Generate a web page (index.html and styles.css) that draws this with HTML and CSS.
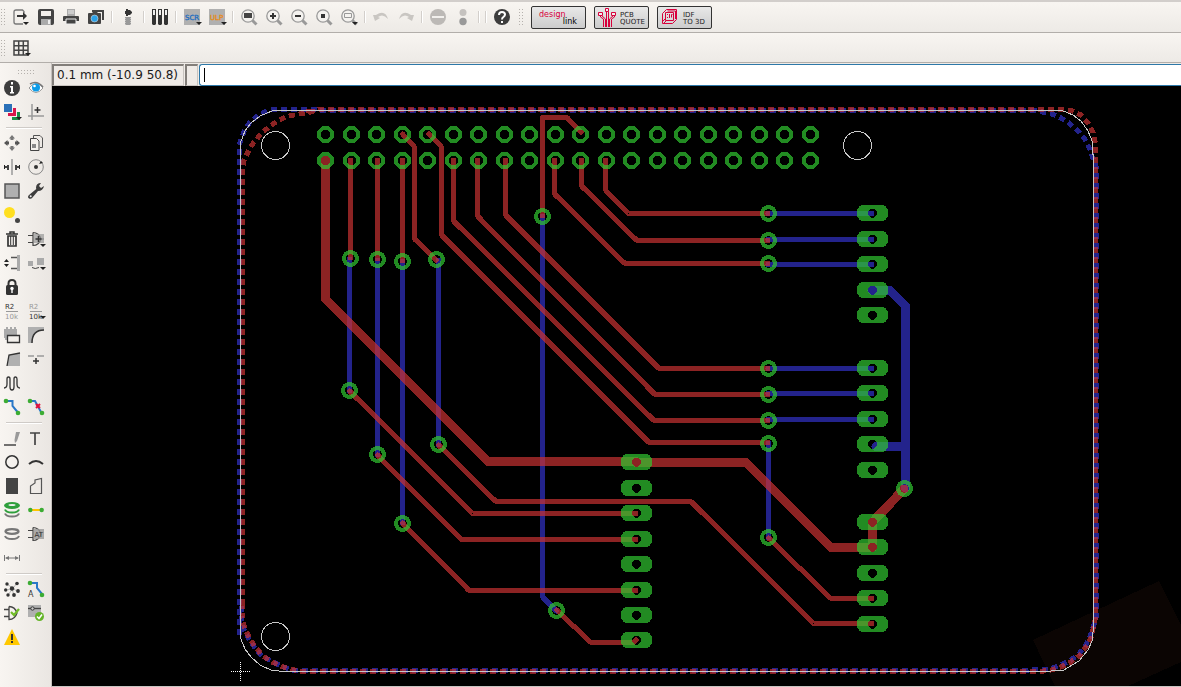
FILE: index.html
```html
<!DOCTYPE html>
<html lang="en">
<head>
  <meta charset="UTF-8">
  <meta name="viewport" content="width=device-width, initial-scale=1.0">
  <title>Board Editor</title>
  <link rel="stylesheet" href="styles.css">
</head>
<body>
  <div class="toolbar toolbar-main">
    <span class="grip"></span>
    <button class="tool" title="Open"><svg viewBox="0 0 16 16"><path d="M11 4V2.500L9.500 1H3Q1 1 1 3v10q0 2 2 2h7" fill="none" stroke="#777" stroke-width="1.300"/><path d="M4 6h6V3l4 4-4 4V8H4z" fill="#333"/><path d="M10 13h6l-3 3z" fill="#222"/></svg></button>
    <button class="tool" title="Save"><svg viewBox="0 0 16 16"><path d="M0 2q0-2 2-2h12q2 0 2 2v12q0 2-2 2H2q-2 0-2-2z" fill="#444"/><path d="M3 2h10v5H3z" fill="#f2efeb"/><path d="M3 10h10v6H3z" fill="#aaa"/><path d="M10 11h2v4h-2z" fill="#eee"/></svg></button>
    <button class="tool" title="Print"><svg viewBox="0 0 16 16"><path d="M4 0h8v7H4z" fill="#aaa"/><path d="M5 2h6M5 4h6" stroke="#eee"/><path d="M0 8q0-1 1-1h14q1 0 1 1v4H0z" fill="#444"/><path d="M3 10h10v5H3z" fill="#444" stroke="#eee"/></svg></button>
    <button class="tool" title="CAM processor"><svg viewBox="0 0 16 16"><path d="M4 2h11v9" fill="none" stroke="#444" stroke-width="2"/><path d="M0 5q0-1 1-1h3l1-1h4l1 1h2q1 0 1 1v9q0 1-1 1H1q-1 0-1-1z" fill="#444"/><circle cx="6.500" cy="9.500" r="3.500" fill="#2aa0e8" stroke="#eee" stroke-width=".5"/></svg></button>
    <span class="sep"></span>
    <button class="tool" title="Schematic"><svg viewBox="0 0 16 16"><path d="M6 0h2v1h2l2 2v1l-2 2H8v1H6V5H5V2h1z" fill="#333"/><path d="M5 8h6v1l-1 .5 1 .5v1l-1 .5 1 .5v1l-1 .5 1 .5v1l-1 1H6l-1-1v-1l1-.5-1-.5v-1l1-.5-1-.5v-1l1-.5-1-.5z" fill="#999"/></svg></button>
    <span class="sep"></span>
    <button class="tool" title="Library"><svg viewBox="0 0 16 16"><path d="M0 0h4v15l-1 1H1l-1-1zM6 0h4v15l-1 1H7l-1-1zM12 0h4v15l-1 1h-2l-1-1z" fill="#333"/><path d="M1 1h2v5H1zM7 1h2v5H7zM13 1h2v5h-2z" fill="#eee"/></svg></button>
    <span class="sep"></span>
    <button class="tool" title="Execute script"><svg viewBox="0 0 16 16"><path d="M0 0h16v16H0z" fill="#b0b0b0"/><text x="1" y="11" class="scr">SCR</text><path d="M12 13h6l-3 3z" fill="#222"/></svg></button>
    <button class="tool" title="Run ULP"><svg viewBox="0 0 16 16"><path d="M0 0h16v16H0z" fill="#b0b0b0"/><text x="1" y="11" class="scr ulp">ULP</text><path d="M12 13h6l-3 3z" fill="#222"/></svg></button>
    <span class="sep"></span>
    <button class="tool" title="Zoom to fit"><svg viewBox="0 0 16 16"><use href="#lens"/><path d="M3 4h8v5H3z" fill="#444"/></svg></button>
    <button class="tool" title="Zoom in"><svg viewBox="0 0 16 16"><use href="#lens"/><path d="M7 4v6M4 7h6" stroke="#333" stroke-width="2"/></svg></button>
    <button class="tool" title="Zoom out"><svg viewBox="0 0 16 16"><use href="#lens"/><path d="M4 7h6" stroke="#333" stroke-width="2"/></svg></button>
    <button class="tool" title="Zoom redraw"><svg viewBox="0 0 16 16"><use href="#lens"/><path d="M5 5h4v4H5z" fill="#333"/></svg></button>
    <button class="tool" title="Zoom select"><svg viewBox="0 0 16 16"><use href="#lens"/><path d="M3.500 4.500h7v4h-7z" fill="none" stroke="#999"/><path d="M11 13h6l-3 3z" fill="#222"/></svg></button>
    <span class="sep"></span>
    <button class="tool" title="Undo"><svg viewBox="0 0 16 16"><path d="M0 6l2 6 5-3-2-1q5-4 10 2Q12 0 3 6z" fill="#c9c6c2"/></svg></button>
    <button class="tool" title="Redo"><svg viewBox="0 0 16 16"><path d="M16 6l-2 6-5-3 2-1Q6 4 1 10 4 0 13 6z" fill="#c9c6c2"/></svg></button>
    <span class="sep"></span>
    <button class="tool" title="Stop"><svg viewBox="0 0 16 16"><circle cx="8" cy="8" r="8" fill="#bcb9b6"/><path d="M2 7h12v2H2z" fill="#f2f0ed"/></svg></button>
    <button class="tool" title="Go"><svg viewBox="0 0 16 16"><circle cx="8" cy="3.500" r="3.500" fill="#c5c2bf"/><circle cx="8" cy="12.500" r="3.700" fill="#999"/></svg></button>
    <span class="sep"></span>
    <span class="sep"></span>
    <button class="tool" title="Help"><svg viewBox="0 0 16 16"><circle cx="8" cy="8" r="8" fill="#3d3d3d"/><path d="M5 6q0-3 3-3t3 2.500q0 1.500-1.500 2.300Q8 8.500 8 10.500" fill="none" stroke="#fff" stroke-width="2"/><path d="M7 12h2v2H7z" fill="#fff"/></svg></button>
    <span class="grip grip-mid"></span>
    <button class="partner design"><span class="red">design</span><span class="link">link</span></button>
    <button class="partner"><svg class="logo" viewBox="0 0 18 20"><g fill="none" stroke="#d8003c"><path d="M2.500 8.500V10L5.500 12v8M3.500 8.500L7.500 12v8M8.500 4.500V20M10.500 4.500V20M15.500 8.500L11.500 12v8M16.500 8.500V10L13.500 12v8"/><path d="M.5 5.500h4v3h-4zM7.500 1.500h3v3h-3zM13.500 5.500h4v3h-4z" fill="#eee"/></g></svg><span>PCB<br>QUOTE</span></button>
    <button class="partner"><svg class="logo" viewBox="0 0 18 20"><g fill="none" stroke="#d8003c"><path d="M1.500 6.500L5.500 2.500H15.500V12.500L11.500 16.500H1.500zM2 14l2-2M4.500 5.500h8v8h-8zM6.500 4h8v8M3 16l3-3M8.500 7v4M6 7.500h1M6 10.500h1M10.500 10.500v-3h1"/></g></svg><span>IDF<br>TO 3D</span></button>
  </div>
  <div class="toolbar toolbar-grid">
    <span class="grip"></span>
    <button class="tool" title="Grid"><svg viewBox="0 0 16 16"><path d="M1 1h14v14H1zM1 5.700h14M1 10.300h14M5.700 1v14M10.300 1v14" fill="none" stroke="#444" stroke-width="1.500"/><path d="M12 13h6l-3 3z" fill="#222"/></svg></button>
  </div>

  <div class="workspace">
    <aside class="sidebar">
      <span class="grip-row"></span>
      <div class="tools">
        <button class="tool" title="Info"><svg viewBox="0 0 16 16"><circle cx="8" cy="8" r="8" fill="#3d3d3d"/><path d="M7 2h2v2.500H7zM6 6h3v6h1v1.500H6V12h1V7.500H6z" fill="#fff"/></svg></button>
        <button class="tool" title="Show"><svg viewBox="0 0 16 16"><path d="M1 8q7-9 14 0-7 9-14 0z" fill="#fff" stroke="#999"/><path d="M2 4q7-4 13 3" fill="none" stroke="#777" stroke-width="1.500"/><circle cx="8" cy="7.500" r="4" fill="#0c9ce8"/><circle cx="6.500" cy="6" r="1.300" fill="#fff"/></svg></button>
        <button class="tool" title="Layers"><svg viewBox="0 0 16 16"><path d="M0 0h8v8H0z" fill="#2a70b8"/><path d="M4 10.500h6.500V4" fill="none" stroke="#d8184c" stroke-width="3"/><path d="M8 14.500h6.500V8" fill="none" stroke="#189048" stroke-width="3"/><path d="M12 13h6l-3 3z" fill="#222"/></svg></button>
        <button class="tool" title="Mark"><svg viewBox="0 0 16 16"><path d="M4 0v16M0 12h16" stroke="#999" stroke-width="1.500"/><path d="M9.500 3v6M6.500 6h6" stroke="#333" stroke-width="1.500"/></svg></button>
      </div>
      <hr>
      <div class="tools">
        <button class="tool" title="Move"><svg viewBox="0 0 16 16"><path d="M8 0l3 3.500H9.500V5h-3V3.500H5zM8 16l-3-3.500h1.500V11h3v1.500H11z" fill="#777"/><path d="M0 8l3.500-3v1.500H5v3H3.500V11zM16 8l-3.500-3v1.500H11v3h1.500V11z" fill="#555"/></svg></button>
        <button class="tool" title="Copy"><svg viewBox="0 0 16 16"><path d="M5.500 3V.5H12L14.500 3v9.500H12" fill="none" stroke="#555"/><path d="M2.500 3.500h6l2.500 2.500v9.500H2.500z" fill="#f4f1ed" stroke="#444"/><path d="M4 9h4v4H4z" fill="#888"/></svg></button>
        <button class="tool" title="Mirror"><svg viewBox="0 0 16 16"><path d="M8 0v16" stroke="#999" stroke-width="1.500"/><path d="M0 6h1v4H0zM16 6h-1v4h1z" fill="#222"/><path d="M1 7h2V6h2v5H3V9H1zM15 7h-2V6h-2v5h2V9h2z" fill="#444"/></svg></button>
        <button class="tool" title="Rotate"><svg viewBox="0 0 16 16"><circle cx="8" cy="8" r="7.300" fill="none" stroke="#888"/><circle cx="8" cy="8" r="2" fill="#333"/><path d="M11 5l2-3 2 2z" fill="#222"/></svg></button>
        <button class="tool" title="Group"><svg viewBox="0 0 16 16"><path d="M1 1h14v14H1z" fill="#b0b0b0" stroke="#555" stroke-width="1.500"/></svg></button>
        <button class="tool" title="Change"><svg viewBox="0 0 16 16"><path d="M13 0Q8 0 8 5l.3 1L1 12q-2 2 0 3.500 2 1 3.500-1L10 8q5 0 6-5l-3 2-2-2z" fill="#3d3d3d"/><circle cx="2.700" cy="13.300" r="1" fill="#eee"/></svg></button>
        <button class="tool" title="Display"><svg viewBox="0 0 16 16"><circle cx="5.500" cy="5.500" r="5.500" fill="#ffdf20"/><circle cx="13.500" cy="13.500" r="2.500" fill="#444"/></svg></button>
        <span></span>
        <button class="tool" title="Delete"><svg viewBox="0 0 16 16"><path d="M2 3h12M6 3V1h4v2" fill="none" stroke="#333" stroke-width="1.500"/><path d="M4 5h8v10H4z" fill="none" stroke="#333" stroke-width="1.700"/><path d="M6.700 5v9M9.300 5v9" stroke="#333"/></svg></button>
        <button class="tool" title="Add"><svg viewBox="0 0 16 16"><path d="M0 4.500h5M0 11.500h5M5 1.500v13q6 0 8-6.500-2-6.500-8-6.500M13 8h3" fill="none" stroke="#444" stroke-width="1.200"/><path d="M6 3h10v9H6z" fill="#999" opacity=".7"/><path d="M10.500 5v6M7.500 8h6" stroke="#333" stroke-width="1.500"/><path d="M12 13h6l-3 3z" fill="#222"/></svg></button>
        <button class="tool" title="Pinswap"><svg viewBox="0 0 16 16"><path d="M13 0h3v16h-3z" fill="#aaa"/><path d="M7 2.500h6M7 13.500h6" stroke="#555" stroke-width="1.500"/><path d="M0 7l2.500-3L5 7zM0 9l2.500 3L5 9z" fill="#222"/></svg></button>
        <button class="tool" title="Replace"><svg viewBox="0 0 16 16"><path d="M0 6h5v5H0zM9 3h7v7H9z" fill="#aaa"/><path d="M4 12.500q3 2 7 0" fill="none" stroke="#444"/><path d="M12 12h6l-3 3z" fill="#222"/></svg></button>
        <button class="tool" title="Lock"><svg viewBox="0 0 16 16"><path d="M4.500 7V4.500q0-3.500 3.500-3.500t3.500 3.500V7" fill="none" stroke="#333" stroke-width="2"/><rect x="2" y="6" width="12" height="10" rx="1.500" fill="#333"/><circle cx="8" cy="9.500" r="1.700" fill="#fff"/><path d="M7.300 10h1.400v4H7.300z" fill="#fff"/></svg></button>
        <span></span>
        <button class="tool" title="Name"><svg viewBox="0 0 16 16"><text x="1" y="6" class="tiny">R2</text><path d="M2 8.500h12" stroke="#999"/><text x="1" y="16" class="tiny dim">10k</text></svg></button>
        <button class="tool" title="Value"><svg viewBox="0 0 16 16"><text x="1" y="6" class="tiny dim">R2</text><path d="M2 8.500h12" stroke="#999"/><text x="1" y="16" class="tiny">10k</text><path d="M12 13h6l-3 3z" fill="#222"/></svg></button>
        <button class="tool" title="Smash"><svg viewBox="0 0 16 16"><path d="M0 2h2V0h2v2h2V0h2v2h2V0h2v2h1v9h-2v2H9v-2H7v2H5v-2H3v2H1v-2H0z" fill="#aaa"/><path d="M3.500 8.500h12v7h-12z" fill="#f2efeb" stroke="#333" stroke-width="1.300"/></svg></button>
        <button class="tool" title="Miter"><svg viewBox="0 0 16 16"><path d="M0 0h16v3Q4 4 4 16H0z" fill="#b0b0b0"/><path d="M4 16Q4 3 16 3" fill="none" stroke="#333" stroke-width="1.500"/></svg></button>
        <button class="tool" title="Split"><svg viewBox="0 0 16 16"><path d="M3 15L5 4l11-2v13z" fill="#b0b0b0"/><path d="M3 15L5 4l11-2" fill="none" stroke="#333" stroke-width="1.300"/></svg></button>
        <button class="tool" title="Optimize"><svg viewBox="0 0 16 16"><path d="M0 5h6M9 5h7" stroke="#999" stroke-width="1.500"/><path d="M8 7v6M5 10h6" stroke="#333" stroke-width="1.500"/></svg></button>
        <button class="tool" title="Meander"><svg viewBox="0 0 16 16"><path d="M0 13q3 0 3-4V4q0-2 1.500-2T6 4v8q0 3 2 3t2-3V4q0-2 1.500-2T13 4v5q0 4 3 4" fill="none" stroke="#333" stroke-width="1.300"/></svg></button>
        <span></span>
        <button class="tool" title="Route"><svg viewBox="0 0 16 16"><path d="M2 2h6.500v5l5 6" fill="none" stroke="#2a78c8" stroke-width="2"/><circle cx="2" cy="2" r="2.300" fill="#3cac34"/><circle cx="14" cy="14" r="2.300" fill="#3cac34"/></svg></button>
        <button class="tool" title="Ripup"><svg viewBox="0 0 16 16"><path d="M2 2h5l6 11" fill="none" stroke="#2a78c8" stroke-width="2"/><path d="M8 5l4 4M12 5l-4 4" stroke="#e0103c" stroke-width="2"/><circle cx="2" cy="2" r="2.300" fill="#3cac34"/><circle cx="14" cy="14" r="2.300" fill="#3cac34"/></svg></button>
      </div>
      <hr>
      <div class="tools">
        <button class="tool" title="Line"><svg viewBox="0 0 16 16"><path d="M0 15h12" stroke="#444" stroke-width="1.500"/><path d="M12 2h4l-3 9-2 2-.5-3z" fill="#999"/></svg></button>
        <button class="tool" title="Text"><svg viewBox="0 0 16 16"><path d="M2 3h10M7 3v12" stroke="#444" stroke-width="1.700"/></svg></button>
        <button class="tool" title="Circle"><svg viewBox="0 0 16 16"><circle cx="8" cy="8" r="6.200" fill="none" stroke="#333" stroke-width="1.500"/></svg></button>
        <button class="tool" title="Arc"><svg viewBox="0 0 16 16"><path d="M1 10q7-6 14 0" fill="none" stroke="#333" stroke-width="2"/></svg></button>
        <button class="tool" title="Rect"><svg viewBox="0 0 16 16"><path d="M2 0h12v16H2z" fill="#444"/></svg></button>
        <button class="tool" title="Polygon"><svg viewBox="0 0 16 16"><path d="M2.500 15.500V8L7 5V2l6.500-1.500v15z" fill="none" stroke="#555" stroke-width="1.200"/></svg></button>
        <button class="tool" title="Via"><svg viewBox="0 0 16 16"><path d="M1 11.500q1 3 7 3t7-3" fill="none" stroke="#777" stroke-width="2"/><path d="M1 7.500q1 3 7 3t7-3" fill="none" stroke="#2f9f3c" stroke-width="2"/><ellipse cx="8" cy="3.500" rx="8" ry="3.500" fill="#2f9f3c"/><ellipse cx="8" cy="3" rx="3.500" ry="1" fill="#eee"/></svg></button>
        <button class="tool" title="Signal"><svg viewBox="0 0 16 16"><path d="M2 8h12" stroke="#ffc400" stroke-width="2"/><circle cx="2.300" cy="8" r="2.200" fill="#3cac34"/><circle cx="13.700" cy="8" r="2.200" fill="#3cac34"/></svg></button>
        <button class="tool" title="Hole"><svg viewBox="0 0 16 16"><ellipse cx="8" cy="5.500" rx="6.500" ry="2.300" fill="none" stroke="#777" stroke-width="2.300"/><path d="M1 10q1 3 7 3t7-3" fill="none" stroke="#777" stroke-width="2"/></svg></button>
        <button class="tool" title="Attribute"><svg viewBox="0 0 16 16"><path d="M0 4.500h5M0 11.500h5M5 1.500v13q6 0 8-6.500-2-6.500-8-6.500" fill="none" stroke="#444" stroke-width="1.200"/><path d="M6 3h10v10H6z" fill="#999" opacity=".8"/><text x="6.500" y="11" class="tiny">AT</text></svg></button>
        <button class="tool" title="Dimension"><svg viewBox="0 0 16 16"><path d="M.5 5v6M15.500 5v6M2 8h12" stroke="#777"/><path d="M1 8l4-2v4zM15 8l-4-2v4z" fill="#777"/></svg></button>
        <span></span>
      </div>
      <hr>
      <div class="tools">
        <button class="tool" title="Ratsnest"><svg viewBox="0 0 16 16"><path d="M3 3l11 8M13 2l-9 12M2 9l6-1 2 6" stroke="#999" stroke-width=".7" fill="none"/><g fill="#333"><circle cx="3" cy="3" r="1.700"/><circle cx="13" cy="2.500" r="1.800"/><circle cx="8" cy="7.500" r="2.200"/><circle cx="1.700" cy="9" r="1.700"/><circle cx="14" cy="10" r="1.900"/><circle cx="4" cy="14" r="1.700"/><circle cx="10" cy="14" r="1.900"/></g></svg></button>
        <button class="tool" title="Auto"><svg viewBox="0 0 16 16"><path d="M2 2h7v5l5 6" fill="none" stroke="#2a78c8" stroke-width="2"/><circle cx="2" cy="2" r="2.300" fill="#3cac34"/><circle cx="14" cy="14" r="2.300" fill="#3cac34"/><text x="0" y="16" class="auto">A</text></svg></button>
        <button class="tool" title="ERC"><svg viewBox="0 0 16 16"><path d="M0 4.500h5M0 11.500h5M5 1.500v13q6 0 8-6.500-2-6.500-8-6.500" fill="none" stroke="#444" stroke-width="1.300"/><path d="M7 7l3 3 5-6" fill="none" stroke="#70bc28" stroke-width="2.200"/></svg></button>
        <button class="tool" title="DRC"><svg viewBox="0 0 16 16"><path d="M0 0h13v12H0z" fill="#b0b0b0"/><path d="M0 3.500h13" stroke="#444" stroke-width="1.300"/><circle cx="4.500" cy="3.500" r="1.700" fill="#ccc" stroke="#333"/><circle cx="11.500" cy="11.500" r="4.500" fill="#64b428"/><path d="M9 11.500l2 2 3-4" fill="none" stroke="#fff" stroke-width="1.500"/></svg></button>
        <button class="tool" title="Errors"><svg viewBox="0 0 16 16"><path d="M8 0l8 16H0z" fill="#ffc800"/><path d="M7 5h2v6H7zM7 12h2v2H7z" fill="#333"/></svg></button>
      </div>
    </aside>

    <main class="editor">
      <div class="command-row">
        <output class="coords">0.1 mm (-10.9 50.8)</output>
        <span class="spacer-box"></span>
        <input class="command" type="text" aria-label="Command line">
      </div>
      <svg class="board" viewBox="52 86 1129 600" preserveAspectRatio="xMinYMin meet">
        <defs>
          <g id="lens"><circle cx="7" cy="7" r="6.200" fill="#f4f2ef" stroke="#999" stroke-width="1.300"/><path d="M11.500 11.500l4 4" stroke="#999" stroke-width="3"/></g>
          <path id="pad" d="M-2.600-6.500H2.600L6.500-2.600V2.600L2.600 6.500H-2.600L-6.500 2.600V-2.600z" fill="none" stroke="#32c832" stroke-width="4"/>
          <circle id="via" r="6.500" fill="none" stroke="#32c832" stroke-width="4"/>
          <path id="long" fill-rule="evenodd" d="M-10-8H10L13-7 15.500-3V3L13 7 10 8H-10L-13 7-15.500 3V-3L-13-7zM-1.500-4.500L-4.500-1.500V1.500L-1.500 4.500H1.500L4.500 1.500V-1.500L1.500-4.500z" fill="#32c832"/>
        </defs>
        <path d="M1033 640L1159 581 1181 625V662L1128 686H1055z" fill="#0b0503"/>

        <!-- bottom copper -->
        <g class="copper bottom">
          <path class="thin" d="M349.500 259V391M377.500 260V455M402.500 261V523M438.500 260V445M542.500 216V597L556.500 611M768.500 443V538M768 213.500H872M768 239.500H872M768 264.500H872M768 368.500H872M768 393.500H872M768 419.500H872"/>
          <path class="thick" d="M872 290.500H890L905.500 306V488M905.500 446.500H876"/>
          <path class="pour" d="M239 635V145L245 129 251 121 260 114 270 110 282 109H315L320 110.500H1035L1052 114 1061 118 1069 123 1077 130 1084 138 1089 147 1092 156 1096 166V618L1090 637 1085 646 1079 654 1071 660 1061 665 1050 669H1030L1028 670H292L281 666 271 661 262 656 255 648 249 639 244 630 241 618V603"/>
        </g>
        <!-- top copper -->
        <g class="copper top">
          <path class="thin" d="M350.500 160V258M377.500 160V259M402.500 160V261M402.500 134L414.500 147V239L436 260M429 134L441.500 147V235L649 442.500H768M453.500 160V221L654 420.500H768M477.500 160V216L655 394.500H768M505.500 160V215L659 368.500H768M542.500 216V117.500H567L581 132M554.500 160V194L625 263.500H768M581.500 160V186L637 240.500H768M605.500 160V190L628.500 213.500H768M349.500 391L472.500 513.500H636M377.500 455L461.500 539.500H636M402.500 523L469 590.500H636M438.500 445L496 501.500H691L813.500 623.500H872M556.500 610L591 642.500H634L636 640M768.500 538L831 598.500H872"/>
          <path class="thick" d="M325.500 160V299L488 461.500H636M636 462.500H746L831 547.500H872.500V522L904 489"/>
          <path class="pour" d="M242 605V171L244 160 249 150 254 142 262 133 270 126 279 120 289 116 299 114 311 112 320 109H1060L1071 110.500 1081 115 1088 123 1093 132 1095.500 144V618L1091 638 1086 647 1079 656 1071 662 1061 667 1051 670 1040 671.500H300L283 667 272 662 263 656 256 648 250 639 245 629 242 618z"/>
          <path class="thin" d="M308 111H313"/>
        </g>
        <!-- pads and vias -->
        <g class="copper">
          <use href="#pad" x="325.500" y="134.500"/><use href="#pad" x="351.500" y="134.500"/><use href="#pad" x="376.500" y="134.500"/><use href="#pad" x="402.500" y="134.500"/><use href="#pad" x="427.500" y="134.500"/>
          <use href="#pad" x="453.500" y="134.500"/><use href="#pad" x="478.500" y="134.500"/><use href="#pad" x="504.500" y="134.500"/><use href="#pad" x="529.500" y="134.500"/><use href="#pad" x="555.500" y="134.500"/>
          <use href="#pad" x="580.500" y="134.500"/><use href="#pad" x="606.500" y="134.500"/><use href="#pad" x="631.500" y="134.500"/><use href="#pad" x="657.500" y="134.500"/><use href="#pad" x="682.500" y="134.500"/>
          <use href="#pad" x="708.500" y="134.500"/><use href="#pad" x="733.500" y="134.500"/><use href="#pad" x="759.500" y="134.500"/><use href="#pad" x="784.500" y="134.500"/><use href="#pad" x="810.500" y="134.500"/>
          <use href="#pad" x="325.500" y="160.500"/><use href="#pad" x="351.500" y="160.500"/><use href="#pad" x="376.500" y="160.500"/><use href="#pad" x="402.500" y="160.500"/><use href="#pad" x="427.500" y="160.500"/>
          <use href="#pad" x="453.500" y="160.500"/><use href="#pad" x="478.500" y="160.500"/><use href="#pad" x="504.500" y="160.500"/><use href="#pad" x="529.500" y="160.500"/><use href="#pad" x="555.500" y="160.500"/>
          <use href="#pad" x="580.500" y="160.500"/><use href="#pad" x="606.500" y="160.500"/><use href="#pad" x="631.500" y="160.500"/><use href="#pad" x="657.500" y="160.500"/><use href="#pad" x="682.500" y="160.500"/>
          <use href="#pad" x="708.500" y="160.500"/><use href="#pad" x="733.500" y="160.500"/><use href="#pad" x="759.500" y="160.500"/><use href="#pad" x="784.500" y="160.500"/><use href="#pad" x="810.500" y="160.500"/>

          <use href="#via" x="350.500" y="258.500"/><use href="#via" x="377.500" y="259.500"/><use href="#via" x="402.500" y="261.500"/><use href="#via" x="436.500" y="259.500"/><use href="#via" x="542.500" y="216.500"/>
          <use href="#via" x="349.500" y="390.500"/><use href="#via" x="377.500" y="454.500"/><use href="#via" x="402.500" y="523.500"/><use href="#via" x="438.500" y="444.500"/><use href="#via" x="556.500" y="610.500"/>
          <use href="#via" x="768.500" y="213.500"/><use href="#via" x="768.500" y="240.500"/><use href="#via" x="768.500" y="263.500"/><use href="#via" x="768.500" y="368.500"/><use href="#via" x="768.500" y="394.500"/>
          <use href="#via" x="768.500" y="420.500"/><use href="#via" x="768.500" y="443.500"/><use href="#via" x="768.500" y="537.500"/><use href="#via" x="904.500" y="488.500"/>

          <use href="#long" x="872.500" y="213"/><use href="#long" x="872.500" y="239"/><use href="#long" x="872.500" y="264"/><use href="#long" x="872.500" y="290"/><use href="#long" x="872.500" y="315"/>
          <use href="#long" x="872.500" y="368"/><use href="#long" x="872.500" y="393"/><use href="#long" x="872.500" y="419"/><use href="#long" x="872.500" y="444"/><use href="#long" x="872.500" y="470"/>
          <use href="#long" x="872.500" y="522"/><use href="#long" x="872.500" y="547"/><use href="#long" x="872.500" y="573"/><use href="#long" x="872.500" y="598"/><use href="#long" x="872.500" y="624"/>
          <use href="#long" x="636.500" y="462"/><use href="#long" x="636.500" y="488"/><use href="#long" x="636.500" y="513"/><use href="#long" x="636.500" y="539"/><use href="#long" x="636.500" y="564"/>
          <use href="#long" x="636.500" y="590"/><use href="#long" x="636.500" y="615"/><use href="#long" x="636.500" y="640"/>
        </g>
        <!-- board outline, mounting holes, origin -->
        <g class="outline">
          <path d="M240.500 142.500L245 131 251 123 260 116 273 110.500H1062L1073 115 1081 121 1088 131 1092.500 142V154H1093.500V624L1092.500 640 1088 650 1079 661 1063 670.500 1040 671.500H285L272 670.500 260 665 251 657 245 649 240.500 638z"/>
          <circle cx="275.500" cy="145.500" r="14"/><circle cx="857.500" cy="145.500" r="14"/><circle cx="275.500" cy="636.500" r="14"/>
          <path class="origin" d="M231 671.500H251M240.500 662V682"/>
        </g>
      </svg>
    </main>
  </div>
</body>
</html>
```
FILE: styles.css
```css
* {
  box-sizing: border-box;
}
body {
  margin: 0;
  height: 100vh;
  display: flex;
  flex-direction: column;
  overflow: hidden;
  background: #efebe7;
  color: #1a1a1a;
  font-family: "DejaVu Sans", sans-serif;
  font-size: 12px;
}
button {
  margin: 0;
  padding: 0;
  border: none;
  background: none;
  font-family: inherit;
}
.toolbar {
  display: flex;
  align-items: center;
  flex: none;
  background: linear-gradient(#f8f5f1, #edeae6);
  border-bottom: 1px solid #b2aeaa;
}
.toolbar-main {
  height: 33px;
  border-top: 2px solid #d2cecb;
}
.toolbar-grid {
  height: 30px;
}
.grip {
  width: 5px;
  height: 18px;
  margin-right: 3px;
  background: radial-gradient(circle, #b5b1ad 1px, transparent 1px) 0 0 / 3px 3px;
}
.grip-mid {
  margin: 0 8px 0 4px;
}
.tool {
  display: flex;
  align-items: center;
  justify-content: center;
  width: 25px;
  height: 24px;
}
.tool svg {
  width: 16px;
  height: 16px;
  overflow: visible;
}
.sep {
  width: 7px;
  height: 12px;
  background: linear-gradient(90deg, #d3cfcb 1px, #fff 1px) no-repeat center / 2px 12px;
}
.partner {
  display: flex;
  align-items: center;
  gap: 4px;
  width: 55px;
  height: 23px;
  margin-right: 8px;
  padding: 0 3px;
  border: 1px solid #333;
  border-radius: 2px;
  background: linear-gradient(#e8e8e8, #cccccc);
  color: #222;
  font-size: 7px;
  line-height: 7px;
  text-align: left;
}
.partner span {
  padding-top: 4px;
}
.logo {
  width: 18px;
  height: 20px;
}
.design {
  flex-direction: column;
  gap: 0;
  padding: 4px 8px 3px 7px;
  font-size: 8px;
}
.design span {
  align-self: flex-start;
  padding: 0;
}
.design .link {
  align-self: flex-end;
  color: #000;
}
.design .red {
  color: #d8003c;
}

.workspace {
  display: flex;
  flex: 1;
  min-height: 0;
}
.sidebar {
  width: 52px;
  flex: none;
  padding-top: 6px;
  background: linear-gradient(90deg, #f8f5f1, #eae6e2);
  border-right: 1px solid #c4c0bc;
}
.grip-row {
  display: block;
  width: 17px;
  height: 5px;
  margin: 0 0 2px 17px;
  background: radial-gradient(circle, #b5b1ad 1px, transparent 1px) 0 0 / 3px 3px;
}
.tools {
  display: grid;
  grid-template-columns: 24px 24px;
}
.tools .tool {
  width: 24px;
}
.sidebar hr {
  height: 2px;
  margin: 3px 9px 2px 6px;
  border: none;
  border-top: 1px solid #cfcbc7;
  background: #fff;
}
.tiny {
  font-size: 7px;
  fill: #333;
}
.scr {
  font-size: 7px;
  fill: #1c6cc0;
  stroke: #1c6cc0;
  stroke-width: 0.3;
}
.ulp {
  fill: #e88a10;
  stroke: #e88a10;
}
.dim {
  fill: #999;
}
.auto {
  font-size: 8px;
  fill: #333;
}

.editor {
  display: flex;
  flex: 1;
  flex-direction: column;
  min-width: 0;
  background: #000;
  border-bottom: 1px solid #c8c5c2;
}
.command-row {
  display: flex;
  gap: 1px;
  height: 23px;
  padding-top: 1px;
  background: #efebe7;
}
.coords,
.spacer-box {
  border: 1px solid #c8c4c0;
  border-top: 2px solid #827e7a;
  border-left: 2px solid #827e7a;
}
.coords {
  width: 132px;
  padding-left: 3px;
  line-height: 18px;
  white-space: nowrap;
}
.spacer-box {
  width: 13px;
}
.command {
  flex: 1;
  min-width: 0;
  padding: 0 6px;
  border: 1px solid #2d78a8;
  border-right: none;
  border-radius: 3px 0 0 3px;
  outline: none;
  font: inherit;
  background: linear-gradient(#000, #000) no-repeat 4px 3px / 1px 14px #fff;
}
.board {
  flex: 1;
  width: 100%;
  min-height: 0;
  shape-rendering: crispEdges;
}
.copper {
  opacity: 0.7;
  fill: none;
}
.bottom {
  stroke: #3232c8;
}
.top {
  stroke: #c83232;
}
.thin {
  stroke-width: 5;
  stroke-linecap: round;
  stroke-linejoin: round;
}
.thick {
  stroke-width: 9;
  stroke-linecap: round;
  stroke-linejoin: round;
}
.pour {
  stroke-width: 5;
  stroke-dasharray: 6 4;
}
.outline {
  fill: none;
  stroke: #c8c8c8;
  stroke-width: 1;
}
.origin {
  stroke: #fff;
  stroke-dasharray: 1 1;
}
```
